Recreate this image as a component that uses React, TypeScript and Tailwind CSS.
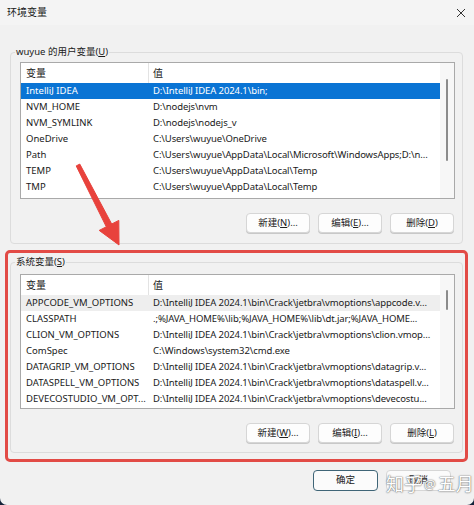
import React from "react";

const userRows: [string, string][] = [
  ["IntelliJ IDEA", "D:\\IntelliJ IDEA 2024.1\\bin;"],
  ["NVM_HOME", "D:\\nodejs\\nvm"],
  ["NVM_SYMLINK", "D:\\nodejs\\nodejs_v"],
  ["OneDrive", "C:\\Users\\wuyue\\OneDrive"],
  ["Path", "C:\\Users\\wuyue\\AppData\\Local\\Microsoft\\WindowsApps;D:\\n..."],
  ["TEMP", "C:\\Users\\wuyue\\AppData\\Local\\Temp"],
  ["TMP", "C:\\Users\\wuyue\\AppData\\Local\\Temp"],
];

const sysRows: [string, string][] = [
  ["APPCODE_VM_OPTIONS", "D:\\IntelliJ IDEA 2024.1\\bin\\Crack\\jetbra\\vmoptions\\appcode.v..."],
  ["CLASSPATH", ".;%JAVA_HOME%\\lib;%JAVA_HOME%\\lib\\dt.jar;%JAVA_HOME..."],
  ["CLION_VM_OPTIONS", "D:\\IntelliJ IDEA 2024.1\\bin\\Crack\\jetbra\\vmoptions\\clion.vmop..."],
  ["ComSpec", "C:\\Windows\\system32\\cmd.exe"],
  ["DATAGRIP_VM_OPTIONS", "D:\\IntelliJ IDEA 2024.1\\bin\\Crack\\jetbra\\vmoptions\\datagrip.v..."],
  ["DATASPELL_VM_OPTIONS", "D:\\IntelliJ IDEA 2024.1\\bin\\Crack\\jetbra\\vmoptions\\dataspell.v..."],
  ["DEVECOSTUDIO_VM_OPT...", "D:\\IntelliJ IDEA 2024.1\\bin\\Crack\\jetbra\\vmoptions\\devecostu..."],
];

function Table({
  rows,
  height,
  selected,
  hover,
  thumbTop,
  thumbH,
}: {
  rows: [string, string][];
  height: string;
  selected?: number;
  hover?: number;
  thumbTop: number;
  thumbH: number;
}) {
  return (
    <div className={`flex ${height} min-w-0 border border-[#a9a9a9] bg-white`}>
      <div className="flex min-w-0 flex-1 flex-col overflow-hidden">
        <div className="flex h-[20px] shrink-0 items-center">
          <div className="w-[127px] pl-[5px] text-[10px] text-[#222]">变量</div>
          <div className="h-full w-px bg-[#e3e3e3]" />
          <div className="pl-[4px] text-[10px] text-[#222]">值</div>
        </div>
        {rows.map((r, i) => {
          const sel = i === selected;
          const hov = i === hover;
          return (
            <div
              key={i}
              className={`flex h-[16px] shrink-0 items-center whitespace-nowrap text-[9.5px] leading-[16px] ${
                sel ? "bg-[#0a74d4] text-white" : hov ? "bg-[#eeeeee] text-[#1a1a1a]" : "text-[#1a1a1a]"
              }`}
            >
              <div className="w-[128px] shrink-0 overflow-hidden pl-[5px]">{r[0]}</div>
              <div className="min-w-0 flex-1 overflow-hidden pl-[4px] tracking-[-0.1px]">{r[1]}</div>
            </div>
          );
        })}
      </div>
      <div className="flex w-[14px] shrink-0 flex-col items-center bg-[#f7f7f7]">
        <div className="h-[2px] w-[2px]" style={{ marginTop: thumbTop }} />
        <div className="w-[2px] rounded-full bg-[#8c8c8c]" style={{ height: thumbH }} />
      </div>
    </div>
  );
}

function Btn({ label, k, dots = true }: { label: string; k: string; dots?: boolean }) {
  return (
    <button className="flex h-[20px] w-[64px] items-center justify-center whitespace-nowrap rounded-[4px] border border-[#d6d6d6] bg-[#fdfdfd] text-[9.5px] text-[#222] shadow-[0_1px_0_#c8c8c8]">
      {label}(<span className="underline">{k}</span>){dots ? "..." : ""}
    </button>
  );
}

export default function App() {
  return (
    <div
      className="relative h-[505px] w-[474px] overflow-hidden bg-[#14233a]"
      style={{ fontFamily: '"Noto Sans", "Noto Sans CJK SC", sans-serif' }}
    >
      <div className="flex h-[505px] w-[474px] flex-col rounded-[7px] bg-[#f1f1f1]">
        {/* title bar */}
        <div className="flex h-[25px] items-center justify-between bg-[#f4f4f4] pl-[7px] pr-[8px]">
          <span className="text-[10px] text-[#1a1a1a]">环境变量</span>
          <svg width="10" height="10" viewBox="0 0 10 10">
            <path d="M1 1L9 9M9 1L1 9" stroke="#333" strokeWidth="1" />
          </svg>
        </div>

        {/* user group */}
        <fieldset className="ml-[10px] mt-[19px] w-[453px] min-w-0 rounded-[4px] border border-[#dcdcdc] pb-[10px] pl-[9px] pr-[7px]">
          <legend className="-ml-[5px] px-[1px] text-[9.5px] leading-[16px] text-[#1a1a1a]">
            wuyue 的用户变量(<span className="underline">U</span>)
          </legend>
          <div className="mt-[2px]">
            <Table rows={userRows} height="h-[137px]" selected={0} thumbTop={14} thumbH={82} />
          </div>
          <div className="mt-[14px] flex justify-end gap-[8px] pr-[1px]">
            <Btn label="新建" k="N" />
            <Btn label="编辑" k="E" />
            <Btn label="删除" k="D" dots={false} />
          </div>
        </fieldset>

        {/* system group highlighted */}
        <div className="ml-[5px] mt-[6px] w-[463px] rounded-[5px] border-[3px] border-[#e24b46] pb-[6px] pl-[2px] pr-[2px] pt-[1px]">
          <fieldset className="min-w-0 rounded-[4px] border border-[#dcdcdc] pb-[9px] pl-[9px] pr-[7px]">
            <legend className="-ml-[5px] px-[1px] text-[9.5px] leading-[16px] text-[#1a1a1a]">
              系统变量(<span className="underline">S</span>)
            </legend>
            <div className="mt-[4px]">
              <Table rows={sysRows} height="h-[135px]" hover={0} thumbTop={13} thumbH={20} />
            </div>
            <div className="mt-[14px] flex justify-end gap-[8px] pr-[1px]">
              <Btn label="新建" k="W" />
              <Btn label="编辑" k="I" />
              <Btn label="删除" k="L" dots={false} />
            </div>
          </fieldset>
        </div>

        {/* bottom buttons */}
        <div className="mt-[8px] flex justify-end gap-[8px] pr-[23px]">
          <button className="flex h-[21px] w-[65px] items-center justify-center rounded-[4px] border-[1.5px] border-[#3f6577] bg-[#fbfbfb] text-[9.5px] text-[#222]">
            确定
          </button>
          <button className="flex h-[21px] w-[65px] items-center justify-center rounded-[4px] border border-[#d6d6d6] bg-[#fbfbfb] text-[9.5px] text-[#222]">
            取消
          </button>
        </div>
      </div>

      {/* red arrow */}
      <svg className="absolute left-0 top-0" width="474" height="505" viewBox="0 0 474 505">
        <polygon
          points="79.8,164.1 111.7,224 118.8,220.4 119,245 99.2,230.4 106.3,226.8 76.2,165.9"
          fill="#e8423c"
          stroke="#e8423c"
          strokeWidth="1"
          strokeLinejoin="round"
        />
      </svg>

      {/* watermark */}
      <div className="absolute left-[386px] top-[473px] flex items-center gap-[2px] whitespace-nowrap text-[18px] leading-[22px] text-white [text-shadow:0_0_1px_#555,0_0_2px_#888]">
        <span>知乎</span>
        <span className="text-[13px]">@</span>
        <span>五月</span>
      </div>
    </div>
  );
}
